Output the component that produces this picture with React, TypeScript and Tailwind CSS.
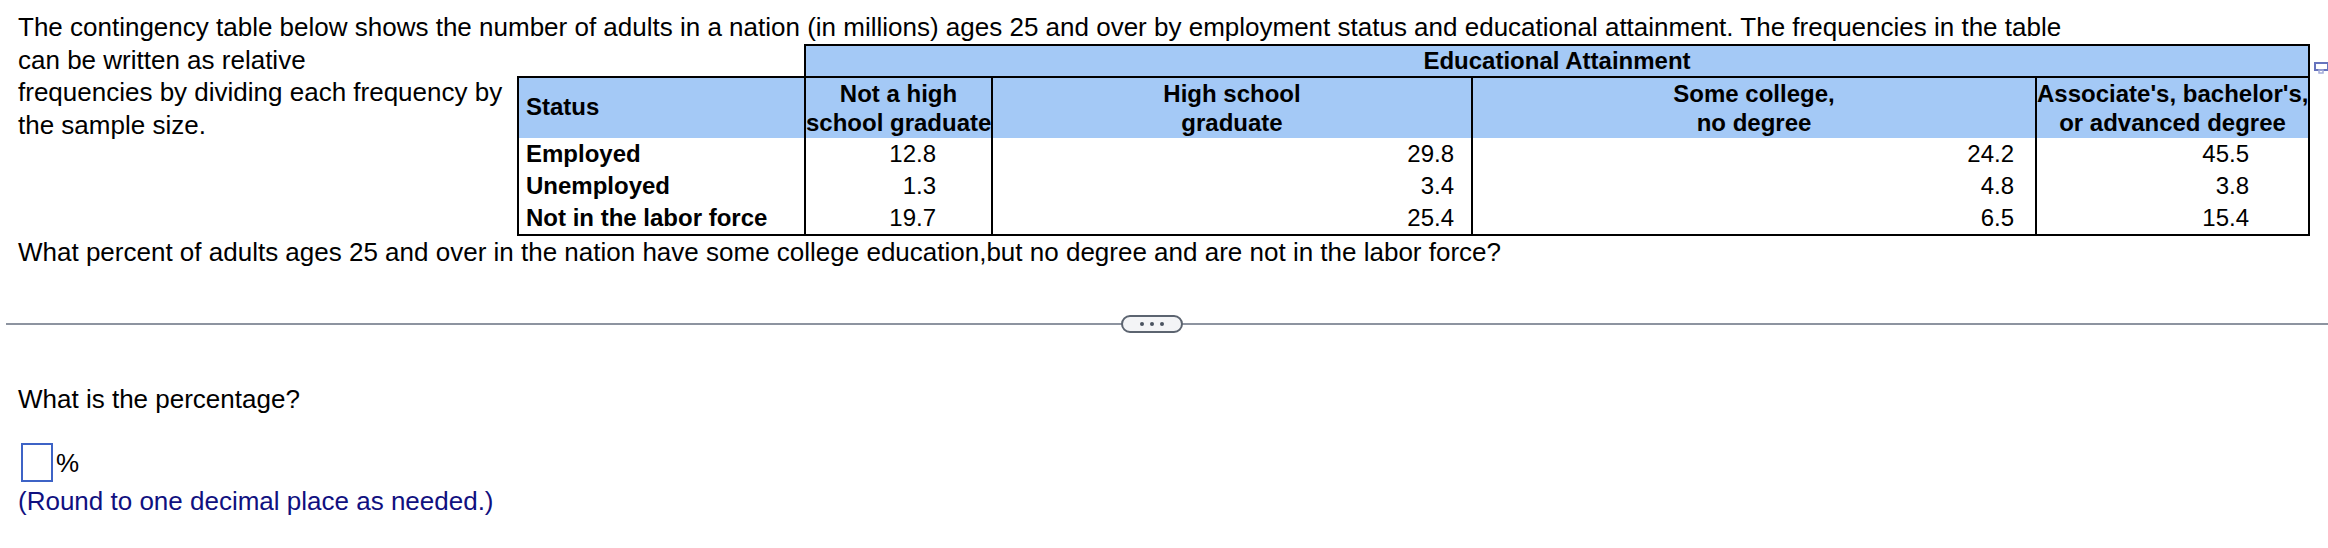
import React from "react";

interface Row {
  label: string;
  values: string[];
}

const rows: Row[] = [
  { label: "Employed", values: ["12.8", "29.8", "24.2", "45.5"] },
  { label: "Unemployed", values: ["1.3", "3.4", "4.8", "3.8"] },
  { label: "Not in the labor force", values: ["19.7", "25.4", "6.5", "15.4"] },
];

// padding so the numbers sit where the reference puts them
const valuePad = ["pr-[55px]", "pr-[17px]", "pr-[21px]", "pr-[59px]"];

function PopoutIcon() {
  return (
    <svg width="15" height="12" viewBox="0 0 15 12" className="shrink-0">
      <rect x="1" y="1" width="13" height="7" fill="none" stroke="#6673bd" strokeWidth="2" />
      <rect x="5" y="8" width="4" height="3" fill="none" stroke="#a3abd8" strokeWidth="1.5" />
    </svg>
  );
}

export default function App() {
  return (
    <div className="w-[2328px] h-[548px] bg-white relative overflow-hidden text-black font-['Liberation_Sans',Arial,sans-serif]">
      <div className="pl-[18px] pt-[11px] text-[26px] leading-[32.5px]">
        <p>
          The contingency table below shows the number of adults in a nation (in millions) ages 25 and over by employment
          status and educational attainment. The frequencies in the table
        </p>

        <div className="flex items-start">
          <div className="w-[499px] shrink-0">
            <p>can be written as relative</p>
            <p>frequencies by dividing each frequency by</p>
            <p>the sample size.</p>
          </div>

          {/* Contingency table */}
          <table className="table-fixed border-collapse w-[1791px] text-[24px]">
            <colgroup>
              <col className="w-[287px]" />
              <col className="w-[187px]" />
              <col className="w-[480px]" />
              <col className="w-[564px]" />
              <col className="w-[273px]" />
            </colgroup>
            <tbody>
              <tr className="h-[32px]">
                <td className="border-0 p-0" />
                <td colSpan={4} className="border-2 border-black bg-[#a4c9f6] text-center font-bold leading-[28px] p-0">
                  Educational Attainment
                </td>
              </tr>
              <tr className="h-[61px] bg-[#a4c9f6]">
                <td className="border-2 border-b-0 border-black font-bold pl-[7px] align-middle">Status</td>
                <td className="border-x-2 border-t-2 border-black font-bold text-center leading-[29px] p-0 whitespace-nowrap">
                  Not a high
                  <br />
                  school graduate
                </td>
                <td className="border-x-2 border-t-2 border-black font-bold text-center leading-[29px] p-0">
                  High school
                  <br />
                  graduate
                </td>
                <td className="border-x-2 border-t-2 border-black font-bold text-center leading-[29px] p-0">
                  Some college,
                  <br />
                  no degree
                </td>
                <td className="border-x-2 border-t-2 border-black font-bold text-center leading-[29px] p-0 whitespace-nowrap">
                  Associate's, bachelor's,
                  <br />
                  or advanced degree
                </td>
              </tr>
              {rows.map((r, i) => (
                <tr key={r.label} className={i === rows.length - 1 ? "h-[33px]" : "h-[32px]"}>
                  <td
                    className={`border-x-2 border-black font-bold pl-[7px] leading-[32px] py-0 whitespace-nowrap ${
                      i === rows.length - 1 ? "border-b-2" : ""
                    }`}
                  >
                    {r.label}
                  </td>
                  {r.values.map((v, j) => (
                    <td
                      key={j}
                      className={`border-x-2 border-black text-right leading-[32px] py-0 ${valuePad[j]} ${
                        i === rows.length - 1 ? "border-b-2" : ""
                      }`}
                    >
                      {v}
                    </td>
                  ))}
                </tr>
              ))}
            </tbody>
          </table>

          <div className="ml-[4px] mt-[18px]">
            <PopoutIcon />
          </div>
        </div>

        <p>What percent of adults ages 25 and over in the nation have some college education,but no degree and are not in the labor force?</p>
      </div>

      {/* divider with the expand pill */}
      <div className="relative mt-[55px] ml-[6px] h-[2px] bg-[#8d94a0]">
        <div className="absolute left-[1115px] -top-[8px] w-[62px] h-[18px] rounded-full border-2 border-[#5c6470] bg-[#f3f4f6] flex items-center justify-center gap-[6px]">
          <span className="w-[4px] h-[4px] rounded-full bg-[#4b5360]" />
          <span className="w-[4px] h-[4px] rounded-full bg-[#4b5360]" />
          <span className="w-[4px] h-[4px] rounded-full bg-[#4b5360]" />
        </div>
      </div>

      <div className="pl-[18px] text-[26px] leading-[32px]">
        <p className="mt-[58px]">What is the percentage?</p>
        <div className="flex items-center mt-[28px] ml-[3px]">
          <div className="w-[32px] h-[39px] border-2 border-[#3d63c6] bg-white" />
          <span className="ml-[3px] leading-[26px]">%</span>
        </div>
        <p className="mt-[3px] text-[#10107f]">(Round to one decimal place as needed.)</p>
      </div>
    </div>
  );
}
